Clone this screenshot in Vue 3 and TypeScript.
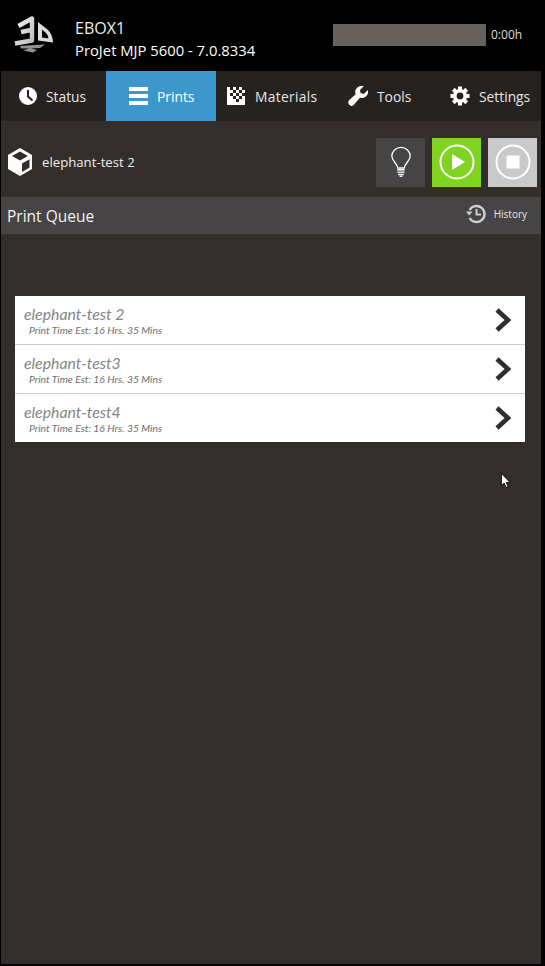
<template>
  <div class="screen">
    <header class="top">
      <svg class="logo" viewBox="0 0 40 38" aria-hidden="true">
        <defs>
          <linearGradient id="logoGrey" x1="0" y1="0" x2="1" y2="1">
            <stop offset="0" stop-color="#f6f6f6" />
            <stop offset="1" stop-color="#bcbcbc" />
          </linearGradient>
        </defs>
        <path d="M5.5 11 L19 3.5 V25.5 L2 28.5 M8 17 L18 15" fill="none" stroke="url(#logoGrey)" stroke-width="4.4" stroke-linejoin="round" />
        <path d="M25 7 L35 15 Q39.5 19 40 27.5 L25 25.5 Z M29 14.5 V22.5 L35.5 23.5 Q35 19.5 32.5 17.5 Z" fill="#dcdcdc" fill-rule="evenodd" />
        <path d="M7 31 L22 30 L32 29.5 L27 33 L18 33.5 L24 35 L20 37.5 L10 35.5 L16 33.5 L8 33.5 Z" fill="#929292" />
      </svg>
      <div class="printer">
        <div class="printer-name">EBOX1</div>
        <div class="printer-model">ProJet MJP 5600 - 7.0.8334</div>
      </div>
      <div class="progress"></div>
      <div class="progress-time">0:00h</div>
    </header>

    <nav class="tabs">
      <div class="tab tab-status">
        <svg class="tab-icon" viewBox="0 0 20 20"><circle cx="10" cy="10" r="9" fill="#fff" /><path d="M10 4 V10.5 L14.5 14.5" fill="none" stroke="#262220" stroke-width="2" /></svg>
        <span>Status</span>
      </div>
      <div class="tab tab-prints active">
        <svg class="tab-icon" viewBox="0 0 20 20"><path d="M1 1 H20 V5 H1 Z M1 8 H20 V12 H1 Z M1 15 H20 V19 H1 Z" fill="#fff" /></svg>
        <span>Prints</span>
      </div>
      <div class="tab tab-materials">
        <svg class="tab-icon" viewBox="0 0 20 20">
          <rect x="1" y="1" width="18" height="18" fill="#fff" />
          <path d="M4 1 H7 V4 H4 Z M10 1 H13 V4 H10 Z M16 1 H19 V4 H16 Z M7 4 H10 V7 H7 Z M13 4 H16 V7 H13 Z M4 7 H7 V10 H4 Z M10 7 H13 V10 H10 Z M16 7 H19 V10 H16 Z M7 10 H10 V13 H7 Z M13 10 H16 V13 H13 Z M10 13 H13 V16 H10 Z" fill="#262220" />
        </svg>
        <span>Materials</span>
      </div>
      <div class="tab tab-tools">
        <svg class="tab-icon" viewBox="0 0 20 20"><path d="M20 4 L15.8 8 L12.5 7 L12 4 L15.8 0 C11.5 -.8 7.2 2 7.2 6 C7.2 6.8 7.4 7.5 7.7 8.2 L1 14.3 C-.6 16 .5 20 3.6 20 C4.7 20 5.5 19.4 6.1 18.6 L12 11.8 C17 12.8 21 9 20 4 Z" fill="#fff" /></svg>
        <span>Tools</span>
      </div>
      <div class="tab tab-settings">
        <svg class="tab-icon" viewBox="0 0 20 20">
          <circle cx="10" cy="10" r="5.2" fill="none" stroke="#fff" stroke-width="3.6" />
          <path d="M8 0.5 H12 V4 H8 Z M8 16 H12 V19.5 H8 Z M0.5 8 H4 V12 H0.5 Z M16 8 H19.5 V12 H16 Z" fill="#fff" />
          <path d="M8 0.5 H12 V4 H8 Z M8 16 H12 V19.5 H8 Z M0.5 8 H4 V12 H0.5 Z M16 8 H19.5 V12 H16 Z" fill="#fff" transform="rotate(45 10 10)" />
        </svg>
        <span>Settings</span>
      </div>
    </nav>

    <section class="job">
      <svg class="cube" viewBox="0 0 24 28"><path d="M12 0 L24 7 V21 L12 28 L0 21 V7 Z M12 3.5 L4 8 L12 12.5 L20 8 Z M14 15.5 V24 L21.5 19.7 V11.2 Z" fill="#fff" fill-rule="evenodd" /></svg>
      <div class="job-name">elephant-test 2</div>
      <div class="job-buttons">
        <div class="btn btn-light">
          <svg class="bulb" viewBox="0 0 24 34">
            <path d="M8.5 23 C8 18 2 15.5 2 10 A10 9.5 0 0 1 22 10 C22 15.5 16 18 15.5 23 Z" fill="none" stroke="#fff" stroke-width="1.4" />
            <path d="M8 25 H16 M8 27.5 H16 M9 30 H15" stroke="#fff" stroke-width="1.6" />
            <path d="M10.5 32 H13.5" stroke="#fff" stroke-width="1.6" />
          </svg>
        </div>
        <div class="btn btn-play">
          <svg viewBox="0 0 36 36" width="36" height="36">
            <circle cx="18" cy="18" r="16.5" fill="none" stroke="#fff" stroke-width="2" />
            <path d="M13 10 L26 18 L13 26 Z" fill="#fff" />
          </svg>
        </div>
        <div class="btn btn-stop">
          <svg viewBox="0 0 36 36" width="36" height="36">
            <circle cx="18" cy="18" r="16.5" fill="none" stroke="#fff" stroke-width="2" />
            <rect x="11.5" y="11.5" width="13" height="13" fill="#fff" />
          </svg>
        </div>
      </div>
    </section>

    <section class="queue-bar">
      <div class="queue-title">Print Queue</div>
      <div class="history">
        <svg class="history-icon" viewBox="0 0 20 20">
          <path d="M3.6 6 A8 8 0 1 1 3.6 14" fill="none" stroke="#cfcfcf" stroke-width="2.4" />
          <path d="M0 7.5 H6.5 L3.2 11.5 Z" fill="#cfcfcf" />
          <path d="M10.5 5 V10.5 H15" fill="none" stroke="#cfcfcf" stroke-width="2" />
        </svg>
        <span>History</span>
      </div>
    </section>

    <main class="content">
      <ul class="queue">
        <li v-for="item in queue" :key="item" class="queue-row">
          <div class="queue-text">
            <div class="queue-name">{{ item }}</div>
            <div class="queue-est">Print Time Est: 16 Hrs. 35 Mins</div>
          </div>
          <svg class="chevron" viewBox="0 0 18 26"><path d="M3 3 L14 13 L3 23" fill="none" stroke="#332e2b" stroke-width="4.6" /></svg>
        </li>
      </ul>
    </main>

    <svg class="cursor" viewBox="0 0 10 16" width="10" height="16"><path d="M.5 .5 V12.5 L3.2 10 L5 14.5 L7 13.6 L5.2 9.6 L8.8 9.3 Z" fill="#fff" stroke="#000" stroke-width=".8" /></svg>
  </div>
</template>

<script setup lang="ts">
const queue: string[] = ['elephant-test 2', 'elephant-test3', 'elephant-test4']
</script>

<style>
html,
body {
  background: #000;
}
</style>

<style scoped>
.screen {
  position: relative;
  width: 545px;
  height: 966px;
  box-sizing: border-box;
  padding: 0 4px 2px 1px;
  display: flex;
  flex-direction: column;
  background: #000;
  color: #fff;
  font-family: "Open Sans", "Noto Sans", sans-serif;
  overflow: hidden;
}

.top {
  height: 71px;
  flex: none;
  display: flex;
  align-items: flex-start;
  margin-right: -4px;
}

.logo {
  width: 40px;
  height: 38px;
  margin: 15px 0 0 12px;
  flex: none;
}

.printer {
  margin: 17px 0 0 22px;
  width: 258px;
  flex: none;
}

.printer-name {
  font-size: 16px;
  line-height: 22px;
  color: #eee;
}

.printer-model {
  font-size: 14.8px;
  line-height: 22px;
}

.progress {
  width: 153px;
  height: 22px;
  margin-top: 24px;
  background: #67625e;
  flex: none;
}

.progress-time {
  margin: 26px 0 0 5px;
  font-size: 12px;
  line-height: 18px;
  color: #ddd;
}

.tabs {
  height: 50px;
  flex: none;
  display: flex;
  background: #262220;
}

.tab {
  display: flex;
  align-items: center;
  box-sizing: border-box;
  font-size: 13.8px;
  color: #e6e6e6;
  flex: none;
}

.tab-icon {
  width: 20px;
  height: 20px;
  flex: none;
}

.tab-status {
  width: 105px;
  padding-left: 17px;
  gap: 8px;
}

.tab-prints {
  width: 110px;
  padding-left: 22px;
  gap: 9px;
}

.tab-materials {
  width: 123px;
  padding-left: 10px;
  gap: 9px;
  letter-spacing: 0.3px;
}

.tab-tools {
  width: 102px;
  padding-left: 9px;
  gap: 9px;
}

.tab-settings {
  width: 100px;
  padding-left: 9px;
  gap: 9px;
}

.active {
  background: #3d97cd;
  color: #fff;
}

.job {
  height: 76px;
  box-sizing: border-box;
  flex: none;
  display: flex;
  align-items: center;
  background: #332e2b;
  padding: 6px 4px 0 7px;
}

.cube {
  width: 24px;
  height: 28px;
  flex: none;
}

.job-name {
  margin-left: 10px;
  font-size: 13.2px;
  color: #eee;
}

.job-buttons {
  margin-left: auto;
  display: flex;
  gap: 7px;
}

.btn {
  width: 49px;
  height: 49px;
  display: flex;
  align-items: center;
  justify-content: center;
}

.bulb {
  width: 22px;
  height: 33px;
}

.btn-light {
  background: #464444;
}

.btn-play {
  background: #80d420;
}

.btn-stop {
  background: #c9c9c9;
}

.queue-bar {
  height: 37px;
  flex: none;
  display: flex;
  align-items: center;
  justify-content: space-between;
  background: #464444;
  padding: 0 14px 0 6px;
}

.queue-title {
  font-size: 15.5px;
  color: #f2f2f2;
}

.history {
  display: flex;
  align-items: center;
  gap: 8px;
  font-size: 10px;
  color: #e6e6e6;
  margin-top: -4px;
}

.history-icon {
  width: 20px;
  height: 20px;
}

.content {
  flex: 1;
  background: #332e2b;
  padding: 62px 16px 0 14px;
}

.queue {
  list-style: none;
  margin: 0;
  padding: 0;
  background: #fff;
}

.queue-row {
  height: 49px;
  box-sizing: border-box;
  display: flex;
  align-items: center;
  justify-content: space-between;
  padding: 0 13px 0 9px;
  border-bottom: 1px solid #ccc;
}

.queue-row:last-child {
  border-bottom: none;
  height: 48px;
}

.queue-text {
  padding-top: 2px;
}

.queue-name {
  font-family: Lato, "Open Sans", sans-serif;
  font-style: italic;
  font-size: 15.8px;
  line-height: 18px;
  color: #858585;
}

.queue-est {
  font-family: Lato, "Open Sans", sans-serif;
  font-style: italic;
  font-size: 10.3px;
  line-height: 13px;
  color: #6e6e6e;
  margin: 1px 0 0 5px;
}

.chevron {
  width: 18px;
  height: 26px;
  flex: none;
}

.cursor {
  position: absolute;
  left: 501px;
  top: 473px;
}
</style>
